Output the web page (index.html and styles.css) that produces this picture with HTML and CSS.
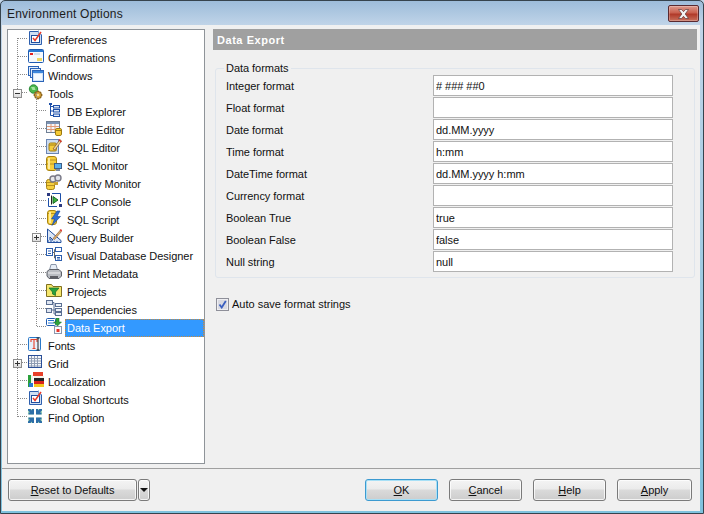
FILE: index.html
```html
<!DOCTYPE html>
<html lang="en">
<head>
<meta charset="utf-8">
<title>Environment Options</title>
<link rel="stylesheet" href="styles.css">
</head>
<body>
<svg class="sprite" xmlns="http://www.w3.org/2000/svg" aria-hidden="true">
  <symbol id="i-prefs" viewBox="0 0 16 16">
    <path d="M1.500 1.500H10.500L13.500 4.500V14.500H1.500Z" fill="#cfdff4" stroke="#2d5fae"/>
    <path d="M10.500 .5V4.500H14" fill="#fff" stroke="#7f9fd0"/>
    <rect x="3.500" y="5.500" width="8" height="7" fill="#fff" stroke="#1f4f9e"/>
    <path d="M5 8L7 10.500L13 2" fill="none" stroke="#e5392b" stroke-width="1.500"/>
  </symbol>
  <symbol id="i-confirm" viewBox="0 0 16 16">
    <rect x=".5" y="1.500" width="15" height="13" rx="1" fill="#f6f9fd" stroke="#1f5bb0"/>
    <rect x="1" y="2" width="14" height="2" fill="#2a78d2"/>
    <rect x="2" y="5" width="3" height="2" fill="#e52020"/>
    <rect x="9" y="10" width="5" height="3" fill="#f0d860"/>
    <path d="M6 6H12" stroke="#b8c8dc"/>
  </symbol>
  <symbol id="i-windows" viewBox="0 0 16 16">
    <rect x=".5" y=".5" width="10" height="9" fill="#e3eefb" stroke="#2a63b8"/>
    <rect x="2.500" y="2.500" width="10" height="9" fill="#e3eefb" stroke="#2a63b8"/>
    <rect x="4.500" y="4.500" width="11" height="11" fill="#cfe2f8" stroke="#2a63b8"/>
    <rect x="5" y="5" width="10" height="2" fill="#3d87dc"/>
    <rect x="6" y="8" width="8" height="6" fill="#f4f9ff"/>
  </symbol>
  <symbol id="i-tools" viewBox="0 0 16 16">
    <circle cx="5.500" cy="5" r="4.200" fill="#4cb84c" stroke="#2a8a38"/>
    <path d="M3 3H6.500L7.500 6H4.500Z" fill="#a4e4a0"/>
    <path d="M10 6.500V15.500M5.500 11H14.500M7 8L13 14M13 8L7 14" stroke="#9c6c18" stroke-width="1.500"/>
    <circle cx="10" cy="11" r="3.500" fill="#d9a437" stroke="#7f5a18"/>
    <circle cx="10" cy="11" r="1.300" fill="#f6dc96"/>
  </symbol>
  <symbol id="i-dbex" viewBox="0 0 16 16">
    <path d="M4.500 3V13.500H8M4.500 9H8M4.500 4.500H8" fill="none" stroke="#1d4fa8"/>
    <rect x="3" y="1" width="3" height="2" fill="#1d4fa8"/>
    <rect x="7.500" y="3.500" width="6" height="2.500" fill="#dbe7f8" stroke="#1d4fa8"/>
    <rect x="7.500" y="7.500" width="6" height="2.500" fill="#dbe7f8" stroke="#1d4fa8"/>
    <rect x="7.500" y="12" width="6" height="2.500" fill="#dbe7f8" stroke="#1d4fa8"/>
  </symbol>
  <symbol id="i-table" viewBox="0 0 16 16">
    <rect x=".5" y="1.500" width="13" height="11" fill="#f4f7fb" stroke="#6f7f95"/>
    <rect x="1" y="2" width="12" height="2" fill="#7c93b5"/>
    <path d="M1 6.500H13M1 9.500H13M5 4V12M9 4V12" stroke="#e09a78"/>
    <rect x="9.500" y="8.500" width="6" height="7" rx="1.400" fill="#f5c935" stroke="#9c7a10"/>
    <path d="M10 10.500H15" stroke="#9c7a10"/>
  </symbol>
  <symbol id="i-sqled" viewBox="0 0 16 16">
    <rect x=".5" y="1.500" width="12" height="14" fill="#cddcf0" stroke="#6a86b4"/>
    <rect x="3" y="5" width="7.500" height="8" rx="1.500" fill="#f5cd3c" stroke="#a07c10"/>
    <path d="M3 7H10.500" stroke="#a07c10"/>
    <path d="M7 11L14 1.500L15.500 3L9 12Z" fill="#e8d8a0" stroke="#7a3a10" stroke-width=".6"/>
    <path d="M13.200 1L15.800 3.400L15 4.400L12.400 2Z" fill="#d92a20"/>
  </symbol>
  <symbol id="i-sqlmon" viewBox="0 0 16 16">
    <rect x=".5" y=".5" width="10" height="14" rx="2.500" fill="#f6cf3e" stroke="#a88310"/>
    <path d="M1 4H10M1 8H10" stroke="#b8921e"/>
    <path d="M2 2H4V13H2Z" fill="#fdeca0"/>
    <rect x="8.500" y="7.500" width="7" height="5" fill="#5cb0ec" stroke="#3d5f88"/>
    <rect x="10" y="13" width="4" height="2" fill="#7a8aa0"/>
  </symbol>
  <symbol id="i-activity" viewBox="0 0 16 16">
    <rect x=".5" y="5.500" width="8" height="10" rx="2" fill="#f6cf3e" stroke="#a88310"/>
    <path d="M1 8.500H8M1 11.500H8" stroke="#b8921e"/>
    <circle cx="7" cy="5" r="3" fill="#e8e8ea" stroke="#7a7a88" stroke-width="1.400"/>
    <circle cx="12" cy="4" r="3" fill="#dfe2ea" stroke="#7a7a88" stroke-width="1.400"/>
    <rect x="8" y="8" width="4" height="3" fill="#c9a230"/>
  </symbol>
  <symbol id="i-clp" viewBox="0 0 16 16">
    <rect x="1" y="1" width="3" height="3" fill="#2c3a80"/>
    <rect x="13" y="12" width="3" height="3" fill="#2c3a80"/>
    <path d="M6 1.500H14.500V10M11 14.500H2.500V6" fill="none" stroke="#1d4fa8"/>
    <path d="M7 4.500L12 8L7 11.500Z" fill="#3cb43c" stroke="#1b6a28"/>
    <path d="M5.500 3.500V12.500" stroke="#222"/>
  </symbol>
  <symbol id="i-script" viewBox="0 0 16 16">
    <rect x="1.500" y=".5" width="9" height="14" rx="2.500" fill="#f6cf3e" stroke="#a88310"/>
    <path d="M2 3.500H10" stroke="#b8921e"/>
    <path d="M3 2H5V13H3Z" fill="#fdeca0"/>
    <path d="M11 1L5.500 9H8.500L6 15.500L14.500 6.500H11L14 1Z" fill="#2f6ed2" stroke="#18448f" stroke-width=".6"/>
  </symbol>
  <symbol id="i-query" viewBox="0 0 16 16">
    <path d="M1.500 1V14.500H15V12.500Z" fill="#dbe6f6" stroke="#23509e"/>
    <path d="M4 9V12H7Z" fill="#fff" stroke="#23509e"/>
    <path d="M2 14.500V12M5 14.500V13M8 14.500V13M11 14.500V13" stroke="#23509e"/>
    <path d="M7 10.500L14 2.500L15.300 3.800L8.500 11.500Z" fill="#d8b070" stroke="#7a3a10" stroke-width=".5"/>
    <path d="M13.600 2L15.500 3.800L16 2.500L15 1Z" fill="#dd2a20"/>
  </symbol>
  <symbol id="i-vdd" viewBox="0 0 16 16">
    <rect x=".5" y="2.500" width="6" height="7" fill="#fff" stroke="#2d5fae"/>
    <path d="M2 5H5M2 7.500H5" stroke="#2d5fae"/>
    <rect x="9.500" y="1.500" width="6" height="4" fill="#fff" stroke="#2d5fae"/>
    <rect x="9.500" y="9.500" width="6" height="5" fill="#fff" stroke="#2d5fae"/>
    <path d="M11 11.500H14M11 13H14" stroke="#2d5fae"/>
    <path d="M7 6.500H8.500V3.500H9.500M8.500 6.500V12H9.500" fill="none" stroke="#666"/>
  </symbol>
  <symbol id="i-print" viewBox="0 0 16 16">
    <path d="M5 .5H10L11.500 6H3.500Z" fill="#e6edf6" stroke="#8a96aa"/>
    <path d="M1 7.500L3.500 5.500H13L15.500 8V12L13 14.500H3L1 12Z" fill="#b9bcc2" stroke="#5d6068"/>
    <path d="M2 9H14" stroke="#f0f0f2"/>
    <path d="M4 13H12" stroke="#44464c" stroke-width="1.600"/>
  </symbol>
  <symbol id="i-proj" viewBox="0 0 16 16">
    <path d="M.5 2.500V14.500H15.500V4.500H7L5.500 2.500Z" fill="#f5e66c" stroke="#807020"/>
    <path d="M3 6H13L9.500 10V13.500L6.500 12V10Z" fill="#29a13a" stroke="#136a26" stroke-width=".7"/>
  </symbol>
  <symbol id="i-dep" viewBox="0 0 16 16">
    <rect x=".5" y=".5" width="6" height="4" fill="#dfe6f2" stroke="#5b6f92"/>
    <rect x=".5" y="8.500" width="5" height="4" fill="#dfe6f2" stroke="#5b6f92"/>
    <rect x="9.500" y="3.500" width="6" height="3" fill="#eef2f8" stroke="#5b6f92"/>
    <rect x="9.500" y="8.500" width="6" height="3" fill="#eef2f8" stroke="#5b6f92"/>
    <rect x="9.500" y="12.500" width="6" height="3" fill="#eef2f8" stroke="#5b6f92"/>
    <path d="M7 2.500H8V14H9M5.500 10H9" fill="none" stroke="#5b6f92"/>
  </symbol>
  <symbol id="i-export" viewBox="0 0 16 16">
    <rect x=".5" y=".5" width="9" height="7" rx="1" fill="#fff" stroke="#1f5bb0"/>
    <path d="M2 2.500H8M2 5H8" stroke="#2a78d2"/>
    <path d="M10 0H13V4H15.500L11.500 8L7.500 4H10Z" fill="#2ea23a" stroke="#14702a" stroke-width=".5"/>
    <rect x="8.500" y="8.500" width="7" height="7" fill="#fbfbfd" stroke="#8a97ad"/>
    <rect x="10.500" y="11" width="3" height="3" fill="#e5342a"/>
  </symbol>
  <symbol id="i-fonts" viewBox="0 0 16 16">
    <rect x=".5" y="1.500" width="12" height="13" rx="1" fill="#e6f1fb" stroke="#2a78c8"/>
    <path d="M3 6V3.500H9V6M6 3.500V12.500M4.500 12.500H7.500" fill="none" stroke="#e8402a" stroke-width="1.100"/>
    <path d="M8.500 2H11.500M8.500 14H11.500M10 2V14" fill="none" stroke="#222"/>
  </symbol>
  <symbol id="i-grid" viewBox="0 0 16 16">
    <rect x=".5" y="1.500" width="13" height="12" fill="#f4f6fa" stroke="#2a4f98"/>
    <path d="M1 4.500H13M1 7H13M1 9.500H13M1 12H13M3.500 2V13M6.500 2V13M9.500 2V13" stroke="#8f9cb2"/>
  </symbol>
  <symbol id="i-local" viewBox="0 0 16 16">
    <rect x="0" y="3" width="3" height="12" fill="#2aa03a"/>
    <rect x="3" y="3" width="2" height="12" fill="#eef4ea"/>
    <rect x="1" y="11" width="4" height="4" fill="#2a78d2"/>
    <rect x="5" y="0" width="10" height="4" fill="#e8402a"/>
    <rect x="6" y="4" width="10" height="2" fill="#f4f0e8"/>
    <rect x="6" y="6" width="10" height="3" fill="#222"/>
    <rect x="6" y="9" width="10" height="3" fill="#d8241c"/>
    <rect x="6" y="12" width="10" height="3" fill="#f4c820"/>
  </symbol>
  <symbol id="i-find" viewBox="0 0 16 16">
    <rect x="0" y="1" width="14" height="14" fill="#b8e6b8"/>
    <rect x="5.500" y="1" width="3" height="14" fill="#fff"/>
    <rect x="0" y="6.500" width="14" height="3" fill="#fff"/>
    <path d="M0 1H2.500L4 2.500V1H6V6.500H.5V4.500H2L0 2.500ZM14 1H11.500L10 2.500V1H8V6.500H13.500V4.500H12L14 2.500ZM0 15H2.500L4 13.500V15H6V9.500H.5V11.500H2L0 13.500ZM14 15H11.500L10 13.500V15H8V9.500H13.500V11.500H12L14 13.500Z" fill="#2c6ea8"/>
  </symbol>
</svg>

<div class="window">
  <header class="titlebar">
    <span class="title">Environment Options</span>
    <button class="close" type="button" aria-label="Close"><svg class="close-x" viewBox="0 0 13 10"><path d="M1.500 .5H4.500L6.500 2.700L8.500 .5H11.500L8.200 5L11.500 9.500H8.500L6.500 7.300L4.500 9.500H1.500L4.800 5Z" fill="#f4f4f4" stroke="#5b3a3a" stroke-width=".7"/></svg></button>
  </header>
  <div class="client">
    <div class="content">
      <nav class="tree">
        <div class="node l1"><svg class="ico"><use href="#i-prefs"/></svg><span class="label">Preferences</span></div>
        <div class="node l1"><svg class="ico"><use href="#i-confirm"/></svg><span class="label">Confirmations</span></div>
        <div class="node l1"><svg class="ico"><use href="#i-windows"/></svg><span class="label">Windows</span></div>
        <div class="node l1"><span class="exp exp-top minus"></span><svg class="ico"><use href="#i-tools"/></svg><span class="label">Tools</span></div>
        <div class="sub">
          <div class="node l2"><svg class="ico"><use href="#i-dbex"/></svg><span class="label">DB Explorer</span></div>
          <div class="node l2"><svg class="ico"><use href="#i-table"/></svg><span class="label">Table Editor</span></div>
          <div class="node l2"><svg class="ico"><use href="#i-sqled"/></svg><span class="label">SQL Editor</span></div>
          <div class="node l2"><svg class="ico"><use href="#i-sqlmon"/></svg><span class="label">SQL Monitor</span></div>
          <div class="node l2"><svg class="ico"><use href="#i-activity"/></svg><span class="label">Activity Monitor</span></div>
          <div class="node l2"><svg class="ico"><use href="#i-clp"/></svg><span class="label">CLP Console</span></div>
          <div class="node l2"><svg class="ico"><use href="#i-script"/></svg><span class="label">SQL Script</span></div>
          <div class="node l2"><span class="exp exp-sub plus"></span><svg class="ico"><use href="#i-query"/></svg><span class="label">Query Builder</span></div>
          <div class="node l2"><svg class="ico"><use href="#i-vdd"/></svg><span class="label">Visual Database Designer</span></div>
          <div class="node l2"><svg class="ico"><use href="#i-print"/></svg><span class="label">Print Metadata</span></div>
          <div class="node l2"><svg class="ico"><use href="#i-proj"/></svg><span class="label">Projects</span></div>
          <div class="node l2"><svg class="ico"><use href="#i-dep"/></svg><span class="label">Dependencies</span></div>
          <div class="node l2 selected"><svg class="ico"><use href="#i-export"/></svg><span class="label">Data Export</span></div>
        </div>
        <div class="node l1"><svg class="ico"><use href="#i-fonts"/></svg><span class="label">Fonts</span></div>
        <div class="node l1"><span class="exp exp-top plus"></span><svg class="ico"><use href="#i-grid"/></svg><span class="label">Grid</span></div>
        <div class="node l1"><svg class="ico"><use href="#i-local"/></svg><span class="label">Localization</span></div>
        <div class="node l1"><svg class="ico"><use href="#i-prefs"/></svg><span class="label">Global Shortcuts</span></div>
        <div class="node l1"><svg class="ico"><use href="#i-find"/></svg><span class="label">Find Option</span></div>
      </nav>
      <main class="panel">
        <h1 class="panel-head">Data Export</h1>
        <fieldset class="group">
          <legend class="group-title">Data formats</legend>
          <div class="field"><label class="field-label">Integer format</label><input class="field-input" type="text" value="# ### ##0"></div>
          <div class="field"><label class="field-label">Float format</label><input class="field-input" type="text" value=""></div>
          <div class="field"><label class="field-label">Date format</label><input class="field-input" type="text" value="dd.MM.yyyy"></div>
          <div class="field"><label class="field-label">Time format</label><input class="field-input" type="text" value="h:mm"></div>
          <div class="field"><label class="field-label">DateTime format</label><input class="field-input" type="text" value="dd.MM.yyyy h:mm"></div>
          <div class="field"><label class="field-label">Currency format</label><input class="field-input" type="text" value=""></div>
          <div class="field"><label class="field-label">Boolean True</label><input class="field-input" type="text" value="true"></div>
          <div class="field"><label class="field-label">Boolean False</label><input class="field-input" type="text" value="false"></div>
          <div class="field"><label class="field-label">Null string</label><input class="field-input" type="text" value="null"></div>
        </fieldset>
        <div class="check-row">
          <span class="check"><svg class="check-mark" viewBox="0 0 9 9"><path d="M1.500 4.500L3.700 7.500L7.800 1" fill="none" stroke="#3a5fc0" stroke-width="1.800"/></svg></span>
          <span class="check-label">Auto save format strings</span>
        </div>
      </main>
    </div>
    <footer class="footer">
      <button class="btn btn-reset" type="button"><u>R</u>eset to Defaults</button>
      <button class="btn btn-arrow" type="button" aria-label="More"><span class="arrow"></span></button>
      <div class="footer-spacer"></div>
      <button class="btn btn-default" type="button"><u>O</u>K</button>
      <button class="btn" type="button"><u>C</u>ancel</button>
      <button class="btn" type="button"><u>H</u>elp</button>
      <button class="btn btn-apply" type="button"><u>A</u>pply</button>
    </footer>
  </div>
</div>
</body>
</html>
```

FILE: styles.css
```css
* { box-sizing: border-box; }

html, body {
  margin: 0;
  padding: 0;
  background: #c3d6e9;
}

body {
  font-family: "Liberation Sans", Arial, sans-serif;
  font-size: 11px;
  color: #111;
}

.sprite {
  position: absolute;
  width: 0;
  height: 0;
}

.window {
  width: 704px;
  height: 514px;
  border: 1px solid #36434d;
  border-radius: 5px 5px 0 0;
  padding: 0 3px 2px 1px;
  background: linear-gradient(180deg, #9dbcda 0, #c0d4e8 24px, #7fc2de 100%);
  display: flex;
  flex-direction: column;
}

.titlebar {
  height: 24px;
  flex: none;
  display: flex;
  align-items: flex-start;
  justify-content: space-between;
  padding-left: 5px;
}

.title {
  font-size: 12px;
  letter-spacing: .2px;
  line-height: 26px;
  color: #1c1c1c;
}

.close {
  width: 31px;
  height: 17px;
  margin: 4px 1px 0 0;
  padding: 0;
  border: 1px solid #5a2a30;
  border-radius: 2px;
  background: linear-gradient(180deg, #dd9a8c 0, #c9604f 45%, #b03a2a 55%, #c8705c 100%);
  box-shadow: inset 0 0 0 1px rgba(255, 255, 255, .25);
  display: flex;
  align-items: center;
  justify-content: center;
}

.close-x {
  width: 13px;
  height: 10px;
  display: block;
}

.client {
  flex: 1;
  min-height: 0;
  background: #f0f0f0;
  display: flex;
  flex-direction: column;
}

.content {
  flex: none;
  height: 444px;
  border-bottom: 1px solid #a0a0a0;
  padding: 4px 3px 4px 5px;
  display: flex;
  gap: 8px;
}

/* tree */
.tree {
  position: relative;
  width: 198px;
  height: 435px;
  flex: none;
  background: #fff;
  border: 1px solid #8f9499;
  padding-top: 1px;
}

.tree::before {
  content: "";
  position: absolute;
  left: 9px;
  top: 8px;
  height: 379px;
  border-left: 1px dotted #8a8a8a;
}

.sub {
  position: relative;
}

.sub::before {
  content: "";
  position: absolute;
  left: 28px;
  top: -10px;
  height: 233px;
  border-left: 1px dotted #8a8a8a;
}

.node {
  position: relative;
  height: 18px;
  display: flex;
  align-items: flex-start;
}

.node::before {
  content: "";
  position: absolute;
  top: 7px;
  height: 0;
  border-top: 1px dotted #8a8a8a;
}

.l1 { padding-left: 20px; }
.l1::before { left: 10px; width: 9px; }
.l2 { padding-left: 38px; }
.l2::before { left: 29px; width: 9px; }

.ico {
  width: 16px;
  height: 16px;
  flex: none;
  margin-top: -1px;
  position: relative;
}

.label {
  display: block;
  height: 18px;
  line-height: 18px;
  padding: 0 2px;
  white-space: nowrap;
  letter-spacing: -.04px;
}

.l1 .label { margin-left: 2px; }
.l2 .label { margin-left: 3px; }

.selected .label {
  flex: 1;
  background: #3399ff;
  color: #fff;
  outline: 1px dotted #c98a3a;
  outline-offset: -1px;
}

.exp {
  position: absolute;
  top: 4px;
  width: 9px;
  height: 9px;
  border: 1px solid #8d8d8d;
  background: linear-gradient(180deg, #fff, #dcdcdc);
  z-index: 1;
}

.exp-top { left: 5px; }
.exp-sub { left: 24px; }

.exp::before {
  content: "";
  position: absolute;
  left: 1px;
  top: 3px;
  width: 5px;
  height: 1px;
  background: #333;
}

.plus::after {
  content: "";
  position: absolute;
  left: 3px;
  top: 1px;
  width: 1px;
  height: 5px;
  background: #333;
}

/* right panel */
.panel {
  width: 484px;
  flex: none;
}

.panel-head {
  margin: 0;
  height: 21px;
  padding-left: 4px;
  background: #a0a0a0;
  color: #fff;
  font-size: 11px;
  font-weight: bold;
  line-height: 22px;
  letter-spacing: .55px;
}

.group {
  margin: 12px 2px 0 2px;
  padding: 0 21px 5px 10px;
  border: 1px solid #dfe5ec;
  border-radius: 3px;
  min-width: 0;
  height: 216px;
}

.group-title {
  margin-left: -2px;
  padding: 0 2px;
  line-height: 13px;
  letter-spacing: -.04px;
}

.field {
  height: 21px;
  margin-bottom: 1px;
  display: flex;
  align-items: center;
  justify-content: space-between;
}

.field-label {
  letter-spacing: -.04px;
}

.field-input {
  width: 240px;
  height: 21px;
  margin: 0;
  padding: 1px 2px 0 2px;
  border: 1px solid #b2b2b2;
  border-radius: 0;
  outline: none;
  background: #fff;
  font-family: "Liberation Sans", Arial, sans-serif;
  font-size: 11px;
  letter-spacing: -.04px;
  color: #111;
}

.check-row {
  margin: 19px 0 0 3px;
  height: 14px;
  display: flex;
  align-items: center;
  gap: 3px;
}

.check {
  width: 13px;
  height: 13px;
  flex: none;
  border: 1px solid #8e8f99;
  background: #d9dae2;
  box-shadow: inset 0 0 0 1px #eeeef2;
  display: flex;
  align-items: center;
  justify-content: center;
}

.check-mark {
  width: 9px;
  height: 9px;
  display: block;
}

.check-label {
  letter-spacing: 0;
}

/* footer */
.footer {
  flex: 1;
  padding: 10px 8px 0 6px;
  display: flex;
  align-items: flex-start;
  gap: 11px;
}

.footer-spacer {
  flex: 1;
  margin-right: -11px;
}

.btn {
  width: 73px;
  height: 22px;
  padding: 0;
  border: 1px solid #7a7a7a;
  border-radius: 3px;
  background: linear-gradient(180deg, #f4f4f4 0, #ebebeb 45%, #dadada 50%, #cdcdcd 100%);
  box-shadow: inset 0 0 0 1px rgba(255, 255, 255, .75);
  font-family: "Liberation Sans", Arial, sans-serif;
  font-size: 11px;
  letter-spacing: -.04px;
  color: #111;
}

.btn-reset {
  width: 129px;
  margin-right: -10px;
}

.btn-arrow {
  width: 12px;
  display: flex;
  align-items: center;
  justify-content: center;
}

.btn-default {
  border-color: #3c9ad0;
  box-shadow: inset 0 0 0 1px #a8e0f6;
}

.btn-apply {
  width: 75px;
}

.arrow {
  width: 0;
  height: 0;
  border-left: 4px solid transparent;
  border-right: 4px solid transparent;
  border-top: 4px solid #111;
}
```
